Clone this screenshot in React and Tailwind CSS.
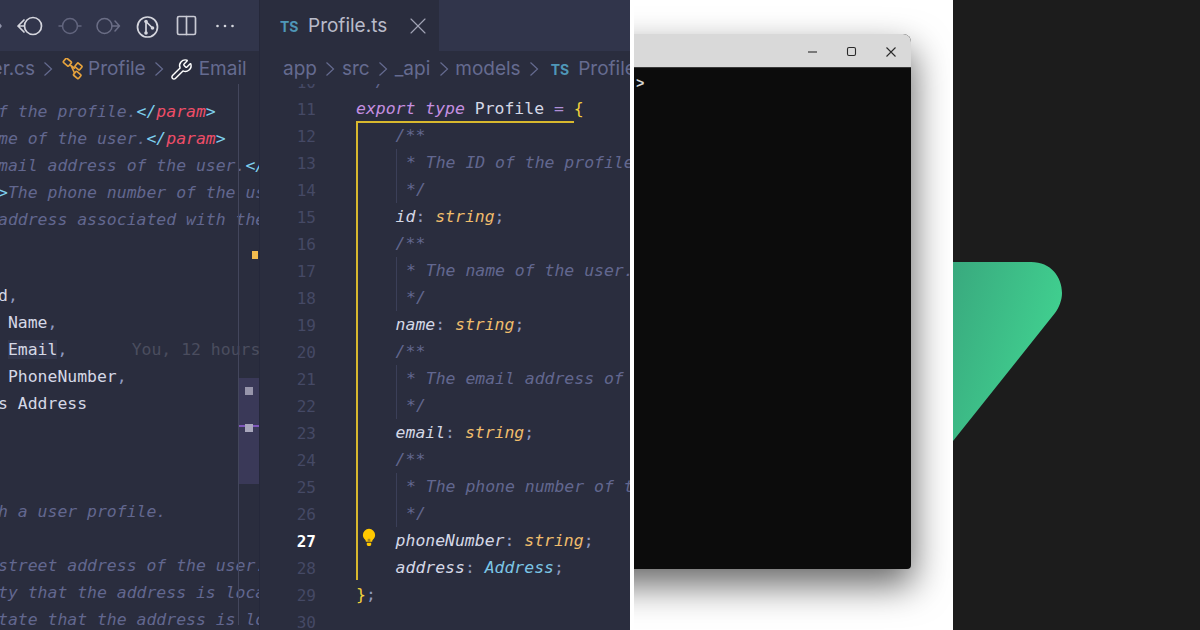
import React from 'react';
import { Wrench, X } from 'lucide-react';

const mono = 'font-["DejaVu_Sans_Mono",monospace] leading-[27px] whitespace-pre';
const ui = 'font-["Inter",sans-serif]';

const Com = ({ children }) => <span className="italic text-[#62678f]">{children}</span>;
const Tag = ({ children }) => <span className="text-[#7fd0ee]">{children}</span>;
const Par = () => <span className="italic text-[#ee4d68]">param</span>;
const Key = ({ children }) => <span className="italic text-[#c58fe0]">{children}</span>;
const Prop = ({ children }) => <span className="italic text-[#d5d8e6]">{children}</span>;
const Typ = () => <span className="italic text-[#f0bd6c]">string</span>;
const Pun = ({ children }) => <span className="text-[#8f9ac0]">{children}</span>;

const leftRows = [
  null,
  <Com>f the profile.<Tag>&lt;/</Tag><Par /><Tag>&gt;</Tag></Com>,
  <Com>me of the user.<Tag>&lt;/</Tag><Par /><Tag>&gt;</Tag></Com>,
  <Com>mail address of the user.<Tag>&lt;/</Tag></Com>,
  <Com><Tag>&gt;</Tag>The phone number of the user</Com>,
  <Com>address associated with the user</Com>,
  null,
  null,
  <span>d<Pun>,</Pun></span>,
  <span> Name<Pun>,</Pun></span>,
  <span> <span className="bg-[#32364c]">Email</span><Pun>,</Pun><span className="ml-[5px] text-[#4b4d5f]">      You, 12 hours</span></span>,
  <span> PhoneNumber<Pun>,</Pun></span>,
  <span>s Address</span>,
  null,
  null,
  null,
  <Com>h a user profile.</Com>,
  null,
  <Com>street address of the user.</Com>,
  <Com>ty that the address is located</Com>,
  <Com>tate that the address is located</Com>,
];

function Bulb() {
  return (
    <svg width="14" height="19" viewBox="0 0 16 22" preserveAspectRatio="none" className="ml-[6px] mt-[1px]">
      <path d="M8 1a7 7 0 0 0-7 7c0 2.600 1.300 4 2.400 5.400.7.9 1 1.600 1 2.600h7.200c0-1 .3-1.700 1-2.600C13.700 12 15 10.600 15 8a7 7 0 0 0-7-7z" fill="#ffc800" />
      <path d="M5.500 17h5v2.200a1.500 1.500 0 0 1-1.500 1.500H7a1.500 1.500 0 0 1-1.500-1.500z" fill="#ffc800" />
      <path d="M6.500 12.500h3v3.500h-3z" fill="#a98a20" />
    </svg>
  );
}

const Comment3 = ({ text }) => (
  <div>
    <div className="pl-[39.6px]"><Com>/**</Com></div>
    <div className="ml-[40px] border-l border-[#3b3f58] pl-[9px]"><Com>* {text}</Com></div>
    <div className="ml-[40px] border-l border-[#3b3f58] pl-[9px]"><Com>*/</Com></div>
  </div>
);

const Field = ({ name, children }) => (
  <div className="pl-[39.6px]"><Prop>{name}</Prop><Pun>: </Pun>{children}<Pun>;</Pun></div>
);

function Chev({ className }) {
  return (
    <svg width="10" height="16" viewBox="0 0 10 16" fill="none" stroke="#656b90" strokeWidth="1.200" className={`shrink-0 ${className}`}>
      <path d="M1.500 1.500L8.500 8l-7 6.500" />
    </svg>
  );
}

function TabIcons() {
  return (
    <svg width="260" height="51" viewBox="0 0 260 51" fill="none" strokeLinecap="round" strokeLinejoin="round">
      <path d="M-2 22l3 4-3 4" stroke="#8f92a8" strokeWidth="1.500" />
      <g stroke="#d5d6de" strokeWidth="1.700">
        <circle cx="33" cy="26" r="8.500" />
        <path d="M24 20l-6 6 6 6M18 26h6" />
      </g>
      <g stroke="#62657e" strokeWidth="1.500">
        <circle cx="70" cy="26" r="7.500" />
        <path d="M59 26h3.500M77.500 26H81" />
      </g>
      <g stroke="#6b6e86" strokeWidth="1.500">
        <circle cx="104.500" cy="26" r="7.500" />
        <path d="M112 26h7.500M115 21l4.500 5-4.500 5" />
      </g>
      <g stroke="#d5d6de" strokeWidth="1.700">
        <circle cx="147.500" cy="27" r="10" />
        <path d="M146 21.500v11.500M146 21.500l6.500 6.500" />
      </g>
      <circle cx="146" cy="21.500" r="1.800" fill="#d5d6de" />
      <circle cx="146" cy="33" r="1.800" fill="#d5d6de" />
      <circle cx="152.500" cy="28" r="1.800" fill="#d5d6de" />
      <g stroke="#c9cad4" strokeWidth="1.700">
        <rect x="177.500" y="16.500" width="18" height="18" rx="1.500" />
        <path d="M186.500 16.500v18" />
      </g>
      <circle cx="217.500" cy="26" r="1.300" fill="#d5d6de" />
      <circle cx="225" cy="26" r="1.300" fill="#d5d6de" />
      <circle cx="232.500" cy="26" r="1.300" fill="#d5d6de" />
    </svg>
  );
}

function StructIcon() {
  return (
    <svg width="21" height="22" viewBox="0 0 21 22" fill="none" stroke="#e5a23d" strokeWidth="1.700" strokeLinejoin="round" className="shrink-0">
      <rect x="2" y="1.500" width="7" height="5.500" rx="1" transform="rotate(40 5.500 4)" />
      <rect x="13.500" y="6" width="6" height="5" rx="1" transform="rotate(40 16.500 8.500)" />
      <rect x="12" y="14.500" width="6.500" height="5" rx="1" transform="rotate(40 15.200 17)" />
      <path d="M8 7l5 3.500M9.500 8.500l3 6.500" />
    </svg>
  );
}

function LeftPane() {
  return (
    <div className="flex w-[260px] shrink-0 flex-col border-r border-[#25283a]">
      <div className="h-[51px] shrink-0 bg-[#31354b]"><TabIcons /></div>
      <div className={`flex h-[33px] shrink-0 items-center pt-[3px] ${ui} text-[19px] text-[#656b90]`}>
        <span className="flex w-[35px] shrink-0 justify-end">er.cs</span>
        <Chev className="ml-[8px]" />
        <span className="ml-[9px]"><StructIcon /></span>
        <span className="ml-[5px]">Profile</span>
        <Chev className="ml-[8px]" />
        <Wrench size={23} strokeWidth={1.500} className="ml-[6px] shrink-0 text-white" />
        <span className="ml-[6px]">Email</span>
      </div>
      <div className="relative flex-1 overflow-hidden">
        <div className={`-mt-[16px] -ml-[2px] text-[16.44px] text-[#d5d8e6] ${mono}`}>
          {leftRows.map((row, i) => (
            <div key={i} className={i === 0 ? 'h-[30px]' : i === 7 ? 'h-[22px]' : 'h-[27px]'}>{row}</div>
          ))}
        </div>
        <div className="absolute inset-y-0 right-0 mb-[5px] w-[21px] border-l border-[#43465c]">
          <div className="absolute left-0 right-0 top-[294px] h-[106px] bg-[#3a3958]" />
          <div className="absolute right-[1px] top-[167px] h-[8px] w-[6px] bg-[#f2bb4e]" />
          <div className="absolute left-[6px] top-[303px] h-[8px] w-[8px] bg-[#9795ab]" />
          <div className="absolute left-0 right-0 top-[341px] h-[2px] bg-[#7f58bb]" />
          <div className="absolute left-[6px] top-[340px] h-[8px] w-[8px] bg-[#a9a7bd]" />
        </div>
      </div>
    </div>
  );
}

function RightPane() {
  const nums = [];
  for (let n = 10; n <= 30; n++) nums.push(n);
  return (
    <div className="flex w-[370px] shrink-0 flex-col">
      <div className="flex h-[51px] shrink-0 bg-[#31354b]">
        <div className={`flex w-[179px] items-center bg-[#2a2d3e] pl-[20px] pt-[1px] ${ui}`}>
          <span className="w-[19px] text-[14px] font-bold text-[#4f97b8]">TS</span>
          <span className="ml-[9px] text-[19px] text-[#b9bbc9]">Profile.ts</span>
          <X size={28} strokeWidth={1} className="ml-[17px] shrink-0 text-[#a0a2b4]" />
        </div>
      </div>
      <div className={`flex h-[33px] shrink-0 items-center overflow-hidden pl-[23px] pt-[3px] ${ui} text-[19px] text-[#656b90]`}>
        <span>app</span>
        <Chev className="ml-[8px]" />
        <span className="ml-[7px]">src</span>
        <Chev className="ml-[8px]" />
        <span className="ml-[7px]">_api</span>
        <Chev className="ml-[9px]" />
        <span className="ml-[6px]">models</span>
        <Chev className="ml-[8px]" />
        <span className="ml-[12px] text-[14px] font-bold text-[#4f97b8]">TS</span>
        <span className="ml-[9px]">Profile</span>
      </div>
      <div className={`relative flex flex-1 overflow-hidden ${mono}`}>
        <div className="-mt-[15px] w-[56px] shrink-0 text-right text-[16px] text-[#454965]">
          {nums.map(n => (
            <div key={n} className={`h-[27px] ${n === 27 ? 'font-bold text-white' : ''}`}>{n}</div>
          ))}
        </div>
        <div className="-mt-[16px] ml-[40px] text-[16.44px] text-[#d5d8e6]">
          <div className="h-[27px]"><Com> */</Com></div>
          <div><Key>export type</Key> Profile <span className="text-[#b08fd8]">=</span> <span className="text-[#f2d13c]">{'{'}</span></div>
          <Comment3 text="The ID of the profile" />
          <Field name="id"><Typ /></Field>
          <Comment3 text="The name of the user." />
          <Field name="name"><Typ /></Field>
          <Comment3 text="The email address of" />
          <Field name="email"><Typ /></Field>
          <Comment3 text="The phone number of the" />
          <div className="flex">
            <span className="w-[39.6px] shrink-0"><Bulb /></span>
            <span><Prop>phoneNumber</Prop><Pun>: </Pun><Typ /><Pun>;</Pun></span>
          </div>
          <div className="pl-[39.6px]"><Prop>address</Prop><Pun>: </Pun><span className="italic text-[#7cc6e6]">Address</span><Pun>;</Pun></div>
          <div><span className="text-[#f2d13c]">{'}'}</span><Pun>;</Pun></div>
        </div>
        {/* bracket pair guide */}
        <div className="absolute left-[96px] top-[37px] h-[459px] w-[218px] border-l-2 border-t-2 border-[#d8b82e]" />
      </div>
    </div>
  );
}

function TitleButtons() {
  return (
    <svg width="100" height="14" viewBox="0 0 100 14" fill="none" stroke="#2a2a2a" strokeWidth="1.100" className="mt-[2px] shrink-0">
      <path d="M1 7h9" />
      <rect x="40.500" y="2.500" width="8" height="8" rx="1.500" />
      <path d="M79.500 2.500l9 9M88.500 2.500l-9 9" />
    </svg>
  );
}

function Terminal() {
  return (
    <div className="h-full w-[323px] shrink-0 bg-white pl-[4px]">
      <div className="h-full w-full overflow-hidden">
        <div className="mt-[34px] -ml-[60px] flex h-[535px] w-[337px] flex-col rounded-tr-[8px] rounded-br-[4px] bg-[#0c0c0c] shadow-[2px_16px_36px_rgba(0,0,0,0.6)]">
          <div className="flex h-[34px] shrink-0 items-center justify-end rounded-tr-[8px] border-b border-[#3a3a3a] bg-[#d9d9d9] pr-[4px]">
            <TitleButtons />
          </div>
          <div className="pl-[62px] pt-[7px] font-['Liberation_Mono',monospace] text-[14px] font-bold leading-[18px] text-[#d8d8d8]">&gt;</div>
        </div>
      </div>
    </div>
  );
}

function Logo() {
  return (
    <svg width="110" height="180" viewBox="0 0 110 180" className="mt-[262px] shrink-0">
      <defs>
        <linearGradient id="logoGrad" x1="0" y1="0" x2="1" y2="0.5">
          <stop offset="0" stopColor="#39a97e" />
          <stop offset="1" stopColor="#41d391" />
        </linearGradient>
      </defs>
      <path d="M0 0H78C98 0 109 15 109 31C109 38 106 46 102 51L0 179Z" fill="url(#logoGrad)" />
    </svg>
  );
}

export default function App() {
  return (
    <div className="flex h-[630px] w-[1200px] overflow-hidden">
      <div className="flex h-full w-[630px] shrink-0 bg-[#2a2d3e]">
        <LeftPane />
        <RightPane />
      </div>
      <Terminal />
      <div className="flex h-full flex-1 items-start bg-[#1c1c1c]">
        <Logo />
      </div>
    </div>
  );
}
